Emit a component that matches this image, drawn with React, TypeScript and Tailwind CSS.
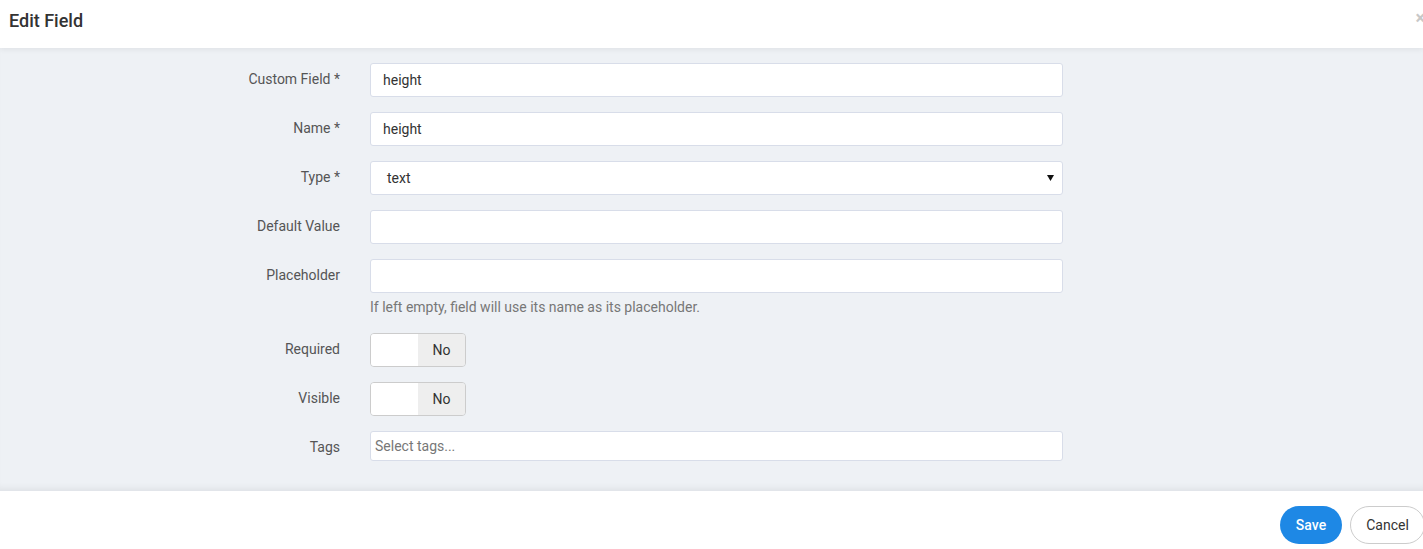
export default function App() {
  const rows: { label: string; value: string }[] = [
    { label: "Custom Field *", value: "height" },
    { label: "Name *", value: "height" },
  ];

  return (
    <div
      className="w-[1423px] h-[549px] overflow-hidden flex flex-col bg-white text-[14px] text-[#333]"
      style={{ fontFamily: "Roboto, 'Liberation Sans', sans-serif" }}
    >
      {/* header */}
      <div className="relative h-[48px] shrink-0 flex items-center px-[9px] pb-[8px] bg-white z-10 shadow-[0_2px_5px_rgba(0,0,0,0.06)]">
        <h1 className="text-[18px] font-medium text-[#333]">Edit Field</h1>
        <span className="absolute right-[-2px] top-[4px] text-[18px] font-bold text-[#c8c8c8]">×</span>
      </div>

      {/* body */}
      <div className="h-[442px] shrink-0 bg-[#eef1f5] pt-[15px] shadow-[inset_0_-6px_6px_-4px_rgba(0,0,0,0.06)]">
        {rows.map((r) => (
          <div key={r.label} className="flex items-center mb-[15px]">
            <label className="w-[340px] pb-[2px] text-right text-[#555]">{r.label}</label>
            <div className="ml-[30px] w-[693px] h-[34px] flex items-center px-[12px] bg-white border border-[#d8dde9] rounded-[3px]">
              {r.value}
            </div>
          </div>
        ))}

        <div className="flex items-center mb-[15px]">
          <label className="w-[340px] pb-[2px] text-right text-[#555]">Type *</label>
          <div className="ml-[30px] w-[693px] h-[34px] flex items-center justify-between pl-[16px] pr-[8px] bg-white border border-[#d8dde9] rounded-[3px]">
            <span>text</span>
            <svg width="7" height="6" viewBox="0 0 7 6">
              <path d="M0 0h7L3.5 6z" fill="#111" />
            </svg>
          </div>
        </div>

        <div className="flex items-center mb-[15px]">
          <label className="w-[340px] pb-[2px] text-right text-[#555]">Default Value</label>
          <div className="ml-[30px] w-[693px] h-[34px] bg-white border border-[#d8dde9] rounded-[3px]" />
        </div>

        <div className="flex items-center">
          <label className="w-[340px] pb-[2px] text-right text-[#555]">Placeholder</label>
          <div className="ml-[30px] w-[693px] h-[34px] bg-white border border-[#d8dde9] rounded-[3px]" />
        </div>
        <p className="ml-[370px] mt-[4px] mb-[16px] leading-5 text-[#777]">
          If left empty, field will use its name as its placeholder.
        </p>

        {["Required", "Visible"].map((l) => (
          <div key={l} className="flex items-center mb-[15px]">
            <label className="w-[340px] pb-[2px] text-right text-[#555]">{l}</label>
            <div className="ml-[30px] w-[96px] h-[34px] flex border border-[#ccc] rounded-[4px] overflow-hidden">
              <span className="w-[47px] bg-white" />
              <span className="flex-1 flex items-center justify-center bg-[#eee] text-[#333]">No</span>
            </div>
          </div>
        ))}

        <div className="flex items-center">
          <label className="w-[340px] pt-[2px] text-right text-[#555]">Tags</label>
          <div className="ml-[30px] w-[693px] h-[30px] flex items-center px-[4px] bg-white border border-[#d8dde9] rounded-[3px] text-[#777]">
            Select tags...
          </div>
        </div>
      </div>

      {/* footer */}
      <div className="flex-1 flex items-end justify-end gap-[8px] border-t border-[#e2e5ea] mr-[-2px] pb-[5px]">
        <button className="w-[62px] h-[38px] rounded-full bg-[#1e88e5] text-white font-medium">Save</button>
        <button className="w-[75px] h-[38px] rounded-full border border-[#ccc] bg-white text-[#333]">Cancel</button>
      </div>
    </div>
  );
}
